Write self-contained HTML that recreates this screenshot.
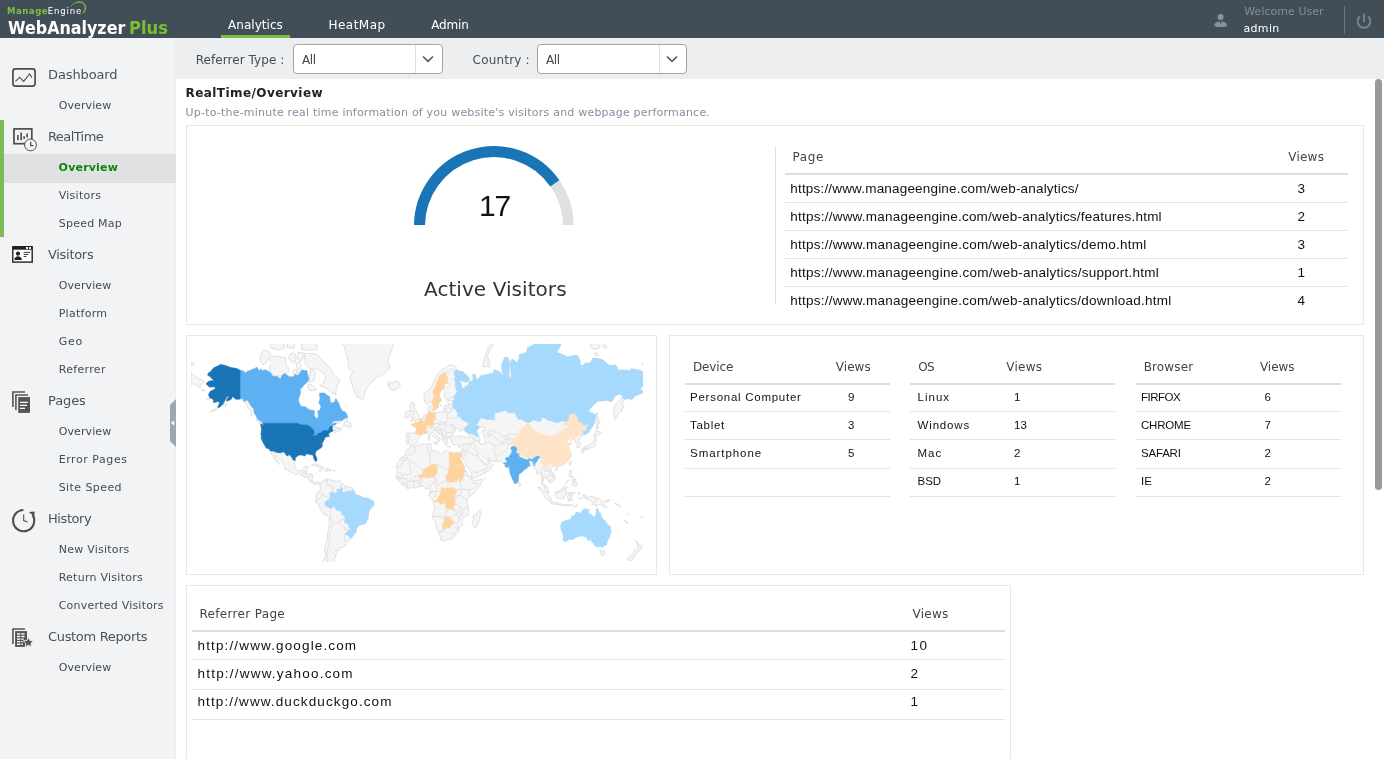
<!DOCTYPE html>
<html lang="en">
<head>
<meta charset="utf-8">
<title>WebAnalyzer Plus - RealTime Overview</title>
<style>
*{box-sizing:border-box;margin:0;padding:0}
html,body{width:1384px;height:760px;overflow:hidden;background:#fff}
body{font-family:"DejaVu Sans","Liberation Sans",sans-serif;font-size:12px;color:#333;position:relative}
.a{position:absolute}
.x{position:absolute;white-space:nowrap;line-height:20px}
.d{font-family:"DejaVu Sans","Liberation Sans",sans-serif}
.l{font-family:"Liberation Sans","DejaVu Sans",sans-serif}
#hdr{position:absolute;left:0;top:0;width:1384px;height:38px;background:#424e57}
#side{position:absolute;left:0;top:38px;width:176px;height:721px;background:#f2f3f5;border-right:1px solid #eaecef}
#fbar{position:absolute;left:176px;top:38px;width:1208px;height:41px;background:#edeef0}
.sel{position:absolute;top:44px;width:150px;height:30px;background:#fff;border:1px solid #a3a3a3;border-radius:4px}
.sel i{position:absolute;right:26px;top:0;width:1px;height:28px;background:#ddd}
.sel svg{position:absolute;right:8px;top:10px}
.panel{position:absolute;border:1px solid #e3e8e8;background:#fff}
</style>
</head>
<body>
<div id="root" style="position:absolute;left:0;top:0;width:1384px;height:760px;will-change:transform">
<div id="hdr"></div>
<div class="a" style="left:221px;top:35px;width:69px;height:3px;background:#7ac143"></div>
<!-- logo -->
<svg class="a" style="left:68px;top:0px" width="22" height="16" viewBox="68 0 22 16"><g fill="none" stroke="#7ac143" stroke-width="0.7"><path d="M70.8 6.6 C73.5 2.6 78.5 1 82.2 2.4 C85.8 3.8 86.8 8 84.2 12.6"/><path d="M74 3.8 C77.5 1.6 81.6 1.6 83.8 3.8 C85.9 6 85.9 9.6 83.4 13.2"/><path d="M77.5 2.4 C80.5 1.8 83.4 2.8 84.6 5 C85.6 7 85.2 10 82.8 13.4"/></g></svg>
<div class="x d" style="left:7.5px;top:18px;font-size:17px;font-weight:bold;color:#fff;transform:scaleX(0.936);transform-origin:0 0">WebAnalyzer</div>
<div class="x d" style="left:128.9px;top:18px;font-size:17px;font-weight:bold;color:#7abf2e;transform:scaleX(0.96);transform-origin:0 0">Plus</div>
<!-- header icons -->
<svg class="a" style="left:1212px;top:12px" width="18" height="18" viewBox="1212 12 18 18"><circle cx="1220.6" cy="17" r="3" fill="#88929a"/><path d="M1214.2 25.5 C1214.4 22.6 1217 21.4 1220.6 21.4 C1224.2 21.4 1226.9 22.6 1227.1 25.5 C1225.5 27.6 1215.8 27.6 1214.2 25.5 Z" fill="#88929a"/><path d="M1219.6 21.4 L1220.6 24.5 L1221.6 21.4 Z" fill="#424e57"/></svg>
<div class="a" style="left:1344px;top:6px;width:1px;height:28px;background:#69747c"></div>
<svg class="a" style="left:1355px;top:12px" width="18" height="18" viewBox="1355 12 18 18"><path d="M1359.9 16.5 A6.4 6.4 0 1 0 1368.1 16.5" fill="none" stroke="#7a858c" stroke-width="1.9"/><path d="M1364 13.8 V22" stroke="#7a858c" stroke-width="1.9"/></svg>

<div id="side">
<div class="a" style="left:0;top:82px;width:4px;height:117px;background:#7cba59"></div>
<div class="a" style="left:4px;top:116px;width:172px;height:29px;background:#e0e1e3"></div>
<svg class="a" style="left:0;top:0" width="60" height="722" viewBox="0 38 60 722">
<g fill="none" stroke="#4d4d4d">
<rect x="12.9" y="68.9" width="22.2" height="17.2" rx="2.6" stroke-width="1.7"/>
<path d="M15.5 81.4 L19.7 77.2 L23.6 81.3 L29.6 73.9 L32 77.8" stroke-width="1.1"/>
<rect x="14" y="128.9" width="17.8" height="14.8" stroke-width="1.7"/>
<path d="M17.9 135 V140.3 M21.2 132.4 V140.3 M24.1 136.2 V139 M27.1 133.6 V137.5" stroke-width="1.6"/>
<circle cx="30.5" cy="144.9" r="5.9" fill="#f2f3f5" stroke-width="1"/>
<path d="M30.7 141.8 V145.6 H33.4" stroke-width="1.3"/>
</g>
<g>
<rect x="12.1" y="246" width="20.8" height="16.8" fill="#222"/>
<rect x="13.5" y="249.7" width="18" height="11.7" fill="#fff"/>
<rect x="26" y="247" width="2" height="1.9" fill="#fff"/><rect x="29" y="247" width="2" height="1.9" fill="#fff"/>
<circle cx="18" cy="253.6" r="2.1" fill="#222"/>
<path d="M14.2 260 C14.6 257.4 16 256.2 18 256.2 C20 256.2 21.6 257.4 22 260 Z" fill="#222"/>
<path d="M23.7 252.4 H30 M23.7 254.5 H28.3 M23.7 256.5 H26.3" stroke="#222" stroke-width="0.9"/>
</g>
<g fill="none" stroke="#555" stroke-width="1.6">
<path d="M25 392 H12.9 V407"/>
<path d="M28 395 H15.9 V410"/>
</g>
<rect x="18.2" y="397.1" width="11.8" height="15.8" fill="#555"/>
<path d="M20 402.3 H27.9 M20 405.3 H27 M20 408.4 H25" stroke="#fff" stroke-width="1.3"/>
<g fill="none" stroke="#4d4d4d">
<path d="M23.4 510 A10.6 10.6 0 1 0 32.6 514.9" stroke-width="2.1"/>
<path d="M23.7 514.4 V520.6 L27.6 522" stroke-width="1.1"/>
</g>
<path d="M28.8 512 L34.6 511.6 L34.3 516.4 Z" fill="#4d4d4d"/>
<path d="M25 629 H12.9 V644" fill="none" stroke="#555" stroke-width="1.6"/>
<rect x="15.1" y="631.1" width="11.9" height="15.8" fill="#555"/>
<g fill="#fff">
<rect x="17" y="633.2" width="3.3" height="1.4"/><rect x="21.3" y="633.2" width="3.3" height="1.4"/>
<rect x="17" y="635.8" width="3.3" height="1.4"/><rect x="21.3" y="635.8" width="3.3" height="1.4"/>
<rect x="17" y="638.4" width="3.3" height="1.4"/><rect x="21.3" y="638.4" width="2.3" height="1.4"/>
<rect x="17" y="641" width="3.3" height="1.4"/><rect x="21.3" y="641" width="1.3" height="1.4"/>
<rect x="17" y="643.6" width="3.3" height="1.4"/><rect x="21.3" y="643.6" width="1.6" height="1.4"/>
</g>
<path d="M28.4 637.2 L29.9 640.5 L33.5 640.9 L30.9 643.4 L31.6 647.0 L28.4 645.2 L25.2 647.0 L25.9 643.4 L23.3 640.9 L26.9 640.5 Z" fill="#555" stroke="#f2f3f5" stroke-width="0.9"/>
</svg>
<svg class="a" style="left:170px;top:361px" width="6" height="48" viewBox="0 0 6 48"><path d="M6 0 L0 6 V42 L6 48 Z" fill="#9aa8b3"/><path d="M4.2 21.2 V26.8 L1 24 Z" fill="#fff"/></svg>
</div>

<div id="fbar"></div>
<div class="sel" style="left:293px"><i></i><svg width="12" height="8" viewBox="0 0 12 8"><path d="M1 1.5 L6 6.3 L11 1.5" fill="none" stroke="#555" stroke-width="1.6"/></svg></div>
<div class="sel" style="left:537px"><i></i><svg width="12" height="8" viewBox="0 0 12 8"><path d="M1 1.5 L6 6.3 L11 1.5" fill="none" stroke="#555" stroke-width="1.6"/></svg></div>

<div class="a" style="left:1375px;top:79px;width:7px;height:411px;background:#999;border-radius:3.5px"></div>

<div class="panel" style="left:186px;top:125px;width:1178px;height:200px"></div>
<svg class="a" style="left:404px;top:140px" width="180" height="85" viewBox="404 140 180 85">
<path d="M419.5 226 A74.4 74.4 0 0 1 568.3 226" fill="none" stroke="#e0e0e0" stroke-width="11"/>
<path d="M419.5 226 A74.4 74.4 0 0 1 554.8 183.3" fill="none" stroke="#1975b5" stroke-width="11"/>
</svg>

<div class="panel" style="left:186px;top:335px;width:471px;height:240px"></div>
<svg class="a" style="left:191px;top:344px" width="452" height="218" viewBox="191 344 452 218">
<path fill="#f5f5f5" stroke="#dcdcdc" stroke-width="0.9" stroke-linejoin="round" d="M191.0,372.9 193.5,374.3 196.6,377.3 199.8,379.3 201.7,379.6 203.8,382.1 202.3,384.0 200.4,384.6 200.7,387.0 199.2,387.5 196.6,386.1 195.4,384.0 192.9,383.7 191.6,384.9 191.0,385.5Z M191.0,363.2 193.5,363.2 194.1,364.8 192.2,365.6 191.0,365.6Z M217.7,407.3 215.5,408.7 213.0,410.2 210.1,411.8 214.3,410.7 217.4,409.1 219.3,407.3Z M308.9,379.3 310.0,373.3 310.0,369.7 313.8,370.1 315.3,371.8 315.0,376.0 313.8,380.9 311.3,381.8 309.4,381.8Z M298.7,375.0 296.8,372.6 297.4,369.0 296.1,364.0 298.0,361.2 300.6,363.2 301.2,369.0 300.6,371.5Z M333.6,425.3 335.8,427.0 336.5,428.4 337.7,428.8 340.2,429.3 341.7,427.3 342.1,429.0 340.9,430.1 337.7,431.3 335.2,433.2 334.3,432.7 334.6,431.3 336.5,430.1 334.6,430.2 333.3,430.4 332.8,430.1 332.3,429.3 332.3,426.8Z M325.7,330.4 332.0,342.8 339.6,342.8 344.0,345.4 347.2,357.0 348.4,363.2 349.1,369.0 353.5,370.8 350.3,376.0 350.1,379.3 352.2,385.5 354.7,392.6 356.6,396.6 360.4,398.6 362.3,399.4 363.5,397.9 364.2,394.0 366.7,388.4 370.5,383.4 376.1,377.7 383.7,374.3 387.5,370.8 390.0,367.1 387.5,361.2 390.0,354.8 392.5,347.9 393.8,340.2 395.0,318.4 379.9,287.2 342.1,302.2Z M387.5,384.0 389.1,381.2 391.9,383.1 395.0,381.5 397.5,380.9 399.3,384.0 400.6,385.5 398.8,387.5 395.0,390.1 391.9,389.8 389.4,389.0 390.0,387.0 387.5,385.8 390.0,384.9Z M410.5,421.1 413.3,420.7 415.2,420.1 417.7,419.7 419.5,418.9 418.7,418.3 419.8,415.8 418.0,415.2 417.7,413.9 417.6,413.1 416.1,411.3 415.7,409.6 415.1,408.9 413.7,408.7 415.2,405.0 413.3,404.8 412.7,405.0 413.9,402.6 411.4,402.6 410.4,405.2 409.9,407.1 410.8,408.7 411.4,410.9 411.5,411.6 413.4,411.1 413.9,413.1 413.8,414.3 412.0,414.6 412.5,416.0 411.2,417.5 413.3,418.5 414.3,418.3 412.4,418.9Z M405.1,417.7 407.0,418.1 409.6,416.8 410.1,414.6 410.8,412.2 410.1,410.5 408.5,410.2 407.0,412.0 405.1,412.6 405.4,414.6 405.9,416.0 404.6,417.1Z M410.6,445.5 409.6,444.3 408.4,443.7 406.5,444.0 406.6,441.6 405.7,441.1 406.5,438.8 406.6,436.1 406.0,434.1 407.6,432.9 410.4,433.1 412.9,433.2 415.4,433.4 416.2,431.5 416.3,429.7 416.2,428.4 415.1,427.0 412.2,425.5 411.7,424.3 413.3,423.6 415.7,424.0 415.3,421.8 416.3,422.4 417.8,422.2 419.6,421.1 419.7,419.5 420.8,419.1 422.0,418.5 422.7,417.3 423.5,415.4 424.5,414.6 426.5,414.6 427.8,413.7 428.5,413.3 428.9,411.1 428.0,409.8 427.9,407.5 428.5,406.2 431.1,404.8 430.7,406.6 431.4,407.8 430.5,409.1 429.8,410.5 430.2,411.3 431.4,412.2 431.6,413.1 433.4,412.2 434.7,412.0 435.6,413.3 438.1,412.4 440.4,411.3 441.1,412.2 442.6,412.2 442.9,411.1 444.2,410.2 444.2,406.9 444.8,405.2 446.2,404.8 447.0,406.4 447.9,406.4 448.4,404.0 447.3,402.4 447.2,401.1 448.8,400.4 451.1,400.2 453.0,400.4 454.2,399.2 455.7,399.4 453.9,397.6 452.7,397.9 449.2,398.6 446.7,399.7 444.8,397.9 444.5,395.3 444.4,392.6 444.8,390.7 446.0,389.0 448.6,386.1 449.7,385.5 449.4,383.7 448.2,383.1 445.7,383.1 444.4,384.6 444.8,386.4 443.6,389.0 442.0,389.8 440.2,391.8 439.4,394.0 439.4,397.4 441.5,399.2 441.0,400.9 439.1,402.6 438.7,404.3 438.4,407.1 437.6,408.4 435.8,408.7 435.6,410.0 433.9,410.0 433.7,408.2 432.8,405.2 431.9,403.1 431.7,401.6 430.9,401.1 429.7,402.1 427.8,403.8 426.5,404.0 424.8,402.1 424.0,398.1 424.0,394.5 425.3,392.6 428.4,389.8 430.8,389.8 430.3,387.8 432.8,384.0 434.1,380.9 436.0,377.7 437.2,374.3 439.7,371.5 441.6,369.7 444.8,368.2 447.3,366.0 450.2,364.8 453.0,365.2 456.7,367.5 455.5,369.7 456.5,369.7 459.3,371.1 463.0,371.8 468.1,376.7 469.6,379.9 468.1,381.8 465.6,382.1 461.8,380.9 459.0,379.3 461.2,384.0 461.7,387.2 463.7,388.7 465.6,387.5 464.9,385.5 468.1,386.7 468.1,384.0 470.6,381.2 473.1,381.8 473.1,377.7 472.9,374.3 475.6,375.0 476.3,379.3 477.9,379.6 480.7,376.0 485.1,375.0 489.5,373.9 493.3,373.3 493.9,369.7 498.3,371.5 500.8,372.6 502.1,374.3 504.0,375.0 502.1,370.8 501.7,365.2 504.0,359.1 505.2,357.0 508.4,357.9 509.4,363.2 509.0,370.8 509.0,376.0 510.3,379.9 511.5,376.0 510.9,370.8 510.3,363.2 512.2,359.1 515.3,361.2 516.6,363.2 519.1,359.1 519.5,354.8 526.7,352.6 527.3,347.9 537.4,342.8 543.7,340.2 549.1,333.4 552.5,337.4 558.8,340.2 560.7,345.4 556.3,352.6 560.0,353.5 567.6,357.0 573.3,355.7 577.7,355.7 580.2,361.2 579.6,364.0 582.7,366.0 585.2,363.2 590.3,363.2 592.8,358.3 596.6,358.3 602.9,360.0 606.6,363.2 609.8,365.6 615.5,365.2 617.1,367.1 617.7,370.1 623.0,370.1 628.1,370.4 629.3,370.8 631.8,368.6 635.6,369.7 639.4,370.1 644.4,372.9 644.4,385.5 643.2,387.0 641.3,386.4 640.6,388.4 643.2,392.9 638.1,394.5 634.4,396.6 632.2,399.2 628.1,398.4 624.9,399.4 623.6,401.6 621.8,404.0 623.0,404.5 623.3,408.2 621.5,408.7 621.8,411.3 619.2,412.0 617.1,415.2 615.1,419.3 614.2,415.2 613.7,410.9 614.2,406.4 615.5,404.5 618.6,401.6 621.6,398.6 622.1,397.6 623.0,395.3 619.5,394.2 616.7,395.0 614.8,396.1 612.9,400.4 610.4,401.4 606.6,400.2 602.9,400.9 597.8,400.9 594.7,404.0 590.9,407.5 588.1,411.3 590.0,411.8 590.9,413.1 592.2,413.1 594.0,414.1 595.6,414.6 595.8,416.8 594.7,419.3 594.7,422.2 592.8,426.0 590.9,428.8 588.4,432.4 585.2,434.4 582.7,435.0 582.2,435.1 581.1,437.0 580.8,438.0 578.3,439.5 578.3,440.4 579.4,441.4 580.7,444.0 580.8,445.5 580.4,446.8 578.9,447.4 577.0,448.0 577.0,445.5 577.2,444.0 576.5,442.9 575.1,442.4 575.5,440.3 574.4,439.1 570.9,440.9 571.6,438.3 570.1,437.8 567.6,440.4 566.0,441.1 567.5,443.2 568.2,443.7 569.9,442.7 572.0,443.3 570.1,444.8 568.0,447.1 569.2,449.4 571.1,452.1 570.7,454.6 571.4,454.8 570.7,457.0 568.9,459.4 567.6,461.2 566.3,462.5 564.4,464.4 561.5,465.4 560.0,465.8 557.5,466.6 556.5,468.1 555.9,466.5 553.7,466.5 552.1,467.4 550.8,469.8 551.8,471.4 554.0,473.6 555.2,477.0 555.4,479.2 552.5,481.0 551.8,482.2 550.0,483.3 549.7,481.8 549.3,481.0 548.1,480.8 547.3,479.4 546.2,478.5 544.9,478.1 544.8,477.0 543.7,477.3 543.5,479.0 542.8,480.9 542.7,482.6 543.7,483.5 544.3,485.1 545.5,485.6 546.4,486.4 547.9,488.1 547.9,489.8 548.6,491.3 549.0,492.4 548.1,492.6 545.3,490.7 544.3,488.5 544.0,487.3 543.3,486.0 541.5,484.1 541.8,481.8 541.9,479.6 542.0,477.7 541.3,476.4 540.8,473.1 539.6,472.5 538.0,474.0 536.5,473.8 536.7,471.8 536.1,469.8 534.8,468.5 534.0,467.4 533.3,465.4 531.9,465.1 531.1,465.8 529.8,466.3 528.5,466.3 527.3,466.5 527.2,467.5 526.5,468.6 525.0,469.1 523.5,470.7 521.4,472.5 520.0,473.4 518.8,474.2 518.6,477.0 518.3,479.0 518.2,481.2 517.2,482.4 516.2,482.9 515.3,484.0 514.1,482.8 513.7,481.5 512.4,479.0 511.9,477.7 511.0,475.3 510.3,473.8 509.7,471.1 509.4,469.8 509.3,467.1 509.0,465.5 508.5,466.9 507.1,467.5 505.9,467.1 504.6,465.4 505.9,465.0 506.2,464.4 504.4,464.1 503.6,463.5 502.7,463.2 501.7,461.9 501.5,461.1 498.9,461.4 495.3,461.4 492.0,461.1 489.9,460.8 489.2,458.7 486.3,459.4 484.0,458.1 481.9,456.3 481.7,455.3 480.7,454.3 479.3,454.1 478.2,454.7 478.2,456.0 479.2,457.7 480.7,459.3 480.9,460.7 481.7,461.9 482.2,460.1 482.7,461.2 482.3,462.6 483.8,462.9 486.3,462.5 487.4,461.2 488.4,460.3 488.7,459.7 488.7,461.8 489.5,463.0 491.5,463.6 493.0,465.1 491.5,467.8 490.5,469.8 489.5,469.9 487.0,471.7 485.8,472.5 483.5,473.8 479.4,475.7 474.4,477.9 472.5,478.1 471.6,475.3 471.5,473.3 469.3,469.8 467.1,466.5 465.6,463.0 463.9,460.5 462.4,457.4 461.7,455.3 460.8,452.7 461.7,450.9 461.9,450.0 462.4,448.8 462.9,447.1 462.9,445.5 463.3,444.6 461.3,444.3 459.9,445.4 458.0,444.8 456.2,444.3 454.9,445.2 453.2,444.4 452.1,444.0 452.0,441.7 451.5,441.6 450.7,440.3 450.7,439.1 450.4,438.0 448.6,437.7 447.7,438.8 446.5,438.3 446.3,440.0 447.0,441.1 447.9,442.4 446.7,442.5 446.9,443.5 446.4,444.8 445.9,444.9 445.0,444.3 444.5,442.7 444.4,441.9 443.9,441.1 443.1,439.8 442.1,438.3 442.3,436.6 441.6,435.6 441.0,435.0 439.7,434.1 437.9,433.2 436.8,432.0 436.0,430.2 435.2,430.9 435.0,429.3 433.2,430.1 433.3,432.0 434.8,433.2 435.6,435.1 437.9,436.0 437.9,436.8 439.1,437.5 441.0,439.0 440.4,439.5 439.1,438.3 438.6,439.6 439.4,440.8 438.5,441.9 437.5,442.5 437.9,441.3 437.5,439.1 436.3,438.1 435.6,437.8 434.1,437.1 433.1,436.1 431.6,435.1 430.9,434.1 430.5,432.5 429.0,431.7 427.8,432.5 427.1,432.7 426.0,433.7 424.5,433.6 423.0,433.2 421.6,433.9 421.6,435.1 421.7,436.0 420.5,436.8 418.7,438.0 417.3,440.0 418.0,441.1 416.8,442.9 415.3,444.1 414.6,444.4 412.2,444.4Z M410.3,445.8 411.0,445.7 413.9,446.6 416.4,446.0 419.6,444.8 421.5,444.3 424.0,444.3 427.1,444.0 430.0,443.5 430.7,444.1 431.7,444.0 430.9,445.5 431.3,447.1 430.4,448.2 431.7,449.8 433.4,450.4 434.3,450.3 436.8,451.2 437.6,452.7 439.7,453.2 441.6,454.1 442.9,453.1 443.0,451.3 444.9,450.3 446.8,450.7 449.2,452.2 451.7,452.5 454.2,453.2 456.7,452.2 458.4,452.7 460.8,452.7 461.7,455.3 460.9,457.7 460.0,457.4 458.8,454.7 460.3,458.4 461.2,460.5 462.7,463.2 464.2,465.8 464.6,468.5 464.8,470.1 466.3,471.1 467.5,474.3 469.6,475.6 472.0,478.1 472.2,479.5 473.8,480.9 476.9,480.0 479.4,479.9 482.3,479.2 482.1,481.0 480.7,484.1 478.2,488.5 475.6,491.2 474.8,491.7 472.5,494.2 470.1,496.3 468.3,497.9 467.7,499.4 466.6,501.8 467.2,502.8 467.5,504.9 468.6,507.5 468.8,510.1 469.1,512.7 468.1,514.9 464.3,517.0 461.8,519.7 462.4,522.6 462.4,525.4 459.3,527.2 458.8,528.1 459.1,529.5 458.5,532.1 456.7,533.7 454.2,536.8 452.8,538.3 450.1,539.8 446.0,539.9 442.9,541.0 441.0,540.2 440.6,537.5 439.5,534.6 438.5,531.8 436.8,529.0 436.0,526.0 436.0,523.8 434.5,520.6 432.6,517.3 432.8,516.2 432.6,514.0 433.4,511.4 434.7,509.9 435.1,507.9 434.1,505.6 433.2,501.9 432.8,500.5 431.7,499.1 429.8,497.2 428.8,495.1 429.7,493.7 430.0,491.3 429.9,489.3 428.4,488.5 426.5,488.7 425.3,488.8 423.4,486.2 422.0,486.1 419.2,486.5 417.4,487.3 415.2,488.1 413.9,487.8 412.7,487.6 410.1,488.1 408.3,488.7 406.4,487.9 404.1,486.2 402.0,484.9 401.1,483.5 400.4,482.2 398.8,480.4 396.7,478.5 396.5,477.2 395.7,475.5 396.9,473.8 397.5,471.1 396.9,469.3 396.3,467.1 397.5,463.5 399.4,460.1 401.1,457.9 403.2,456.6 405.1,455.3 405.5,453.8 405.4,452.4 407.0,449.7 408.1,449.2 409.1,448.6Z M479.8,509.4 480.9,513.3 481.3,514.5 479.9,516.6 479.4,519.3 478.2,523.3 477.0,526.6 474.6,527.6 472.7,524.7 472.2,522.3 473.6,519.9 473.1,517.3 473.6,514.9 476.0,514.2 478.0,512.3 479.2,510.1Z M270.2,450.9 270.8,452.4 271.8,454.6 273.9,457.4 273.1,457.9 274.7,459.3 276.4,461.7 278.8,463.9 279.3,464.6 279.9,463.9 278.8,462.6 277.5,460.3 276.2,458.1 275.1,456.0 273.5,453.8 273.1,451.9 275.4,453.1 276.0,454.7 277.9,457.4 279.9,459.6 281.7,461.7 283.7,464.1 284.8,466.5 285.1,467.8 285.4,469.4 286.3,469.7 289.0,471.1 290.5,471.9 291.9,472.7 294.3,473.8 296.8,474.2 298.3,473.5 299.9,474.0 301.6,475.7 303.1,476.5 304.6,476.9 306.9,477.4 307.6,477.8 308.5,479.0 309.6,480.1 309.6,481.5 310.9,481.8 312.3,482.9 313.2,483.7 314.4,483.8 316.3,485.1 316.9,483.8 317.6,482.8 319.2,483.7 319.6,485.1 320.2,483.2 318.2,482.2 317.1,482.4 315.4,483.1 313.8,482.2 313.2,481.5 312.3,480.3 312.1,478.3 312.6,476.4 312.9,475.1 311.3,474.0 309.4,473.9 307.2,473.9 306.2,474.0 305.7,473.9 306.5,473.1 306.6,471.8 306.7,470.5 307.5,469.1 307.6,468.1 308.4,466.9 307.5,466.5 306.2,466.5 304.0,467.0 303.7,468.5 303.5,469.4 302.4,470.3 300.8,470.5 298.7,470.9 297.0,470.1 296.7,469.5 295.3,467.5 294.6,465.4 294.6,463.0 295.3,460.4 294.9,460.4 292.9,459.7 292.4,458.1 291.4,457.0 290.0,454.8 288.6,454.8 287.8,456.0 286.1,455.1 285.6,453.7 283.6,451.9 281.4,451.9 281.4,452.7 277.8,452.7 273.1,450.9Z M310.8,465.9 313.2,464.4 313.9,464.1 316.3,464.3 318.2,465.2 320.7,466.2 322.3,467.1 324.2,468.2 322.6,468.6 319.8,468.7 320.5,467.7 318.8,467.1 316.9,466.2 314.7,465.5 312.5,465.5Z M324.0,470.7 325.7,468.6 327.4,468.7 329.5,468.9 331.5,470.3 329.7,470.6 327.6,471.5 326.0,470.9Z M319.1,470.6 321.6,471.0 320.7,471.4 319.2,471.0Z M333.1,470.5 335.1,470.6 334.8,471.1 333.1,471.1Z M320.2,483.2 321.0,484.1 322.5,480.9 323.5,480.3 325.7,479.6 327.6,478.5 327.9,480.3 327.3,481.5 329.3,479.6 329.5,478.7 331.4,480.8 334.6,480.8 336.5,481.3 339.0,480.8 339.7,480.6 340.9,482.2 341.5,483.5 343.4,484.1 344.4,485.6 345.9,486.6 348.2,486.8 349.8,487.0 351.8,488.0 352.6,489.2 354.7,491.9 354.7,494.2 356.6,495.1 357.5,495.0 361.6,496.7 361.9,497.4 365.4,497.9 368.6,498.6 370.7,500.1 373.2,500.8 373.9,503.2 373.6,505.6 371.1,508.1 369.2,510.7 368.6,513.3 368.3,517.0 367.7,519.5 366.9,520.3 366.1,522.6 364.8,524.0 363.3,524.0 361.4,524.4 359.4,525.4 357.4,527.0 356.6,528.1 356.5,530.4 356.0,531.8 354.7,533.8 353.2,535.6 352.1,537.1 350.4,539.3 348.5,541.2 346.9,541.2 344.1,539.8 344.1,540.7 345.7,542.1 346.3,543.5 345.3,546.0 343.4,547.1 339.5,547.5 339.4,550.3 335.8,550.6 336.7,553.4 335.4,555.2 335.8,557.8 332.7,559.6 334.8,561.8 332.4,565.8 330.8,568.1 331.5,572.0 328.3,574.9 323.9,571.1 322.6,563.3 322.6,560.9 325.1,557.8 325.7,552.6 324.7,552.3 324.9,548.9 325.5,544.6 327.0,541.3 327.5,538.3 327.6,533.8 328.3,529.5 329.0,524.8 329.4,520.2 329.2,517.8 327.6,516.3 326.1,515.4 323.0,513.8 321.6,511.8 320.6,509.4 319.2,506.9 318.2,504.4 317.1,502.8 315.4,501.8 315.3,499.9 316.6,498.5 316.9,497.6 315.8,497.0 316.1,495.5 316.8,494.2 316.9,493.2 318.4,492.2 320.1,490.9 320.7,489.3 320.1,487.3 320.2,485.7 319.6,485.1Z M335.8,394.8 332.0,392.9 327.0,389.0 323.9,387.0 319.5,385.8 324.5,382.4 325.7,376.0 319.5,369.7 316.9,369.0 310.6,369.0 305.6,365.2 305.0,361.2 304.3,353.5 310.6,353.5 315.7,353.9 320.7,357.9 324.5,363.2 329.5,367.1 332.0,370.8 333.3,375.0 337.7,377.7 340.2,380.6 337.1,385.5 335.8,391.2Z M289.9,370.8 285.4,374.3 279.1,376.0 274.1,375.0 270.3,372.6 269.1,367.1 272.8,363.2 268.4,359.1 274.1,355.7 281.7,357.0 285.4,357.9 286.1,365.2Z M259.9,360.4 262.8,364.8 265.9,363.6 267.2,359.1 271.0,355.3 269.7,351.7 264.7,350.3 260.9,353.5Z M308.1,384.0 311.9,384.6 315.7,388.4 316.3,389.8 313.2,390.4 310.0,390.7 308.1,388.4Z M288.6,357.9 291.7,362.0 295.5,362.0 296.1,357.0 294.3,353.0 290.5,353.5Z M297.0,358.7 301.2,361.2 303.7,356.2 303.1,352.6 298.0,352.6Z M292.4,372.6 294.9,373.9 297.4,373.3 296.1,369.7 293.6,369.7Z M301.8,349.8 310.6,350.3 316.9,349.8 316.9,343.9 306.9,340.2 301.8,341.3Z M270.3,347.9 279.1,350.3 284.2,347.9 284.2,342.8 276.6,340.2 270.3,341.8Z M286.7,347.9 294.3,347.9 294.9,341.8 288.0,340.2Z M304.3,341.3 316.9,341.8 320.7,334.6 327.0,328.5 335.8,310.7 329.5,292.5 304.3,310.7Z M343.0,425.8 344.6,422.2 346.2,418.7 347.8,418.1 347.2,421.3 348.4,422.2 350.3,422.6 350.9,424.2 351.3,426.0 350.2,427.5 347.8,427.1 347.2,425.8Z M256.0,419.7 259.9,420.7 262.1,423.6 262.3,424.3 260.2,423.8 258.0,421.8Z M223.1,405.0 225.9,403.3 226.2,405.2 224.0,406.9Z M250.2,413.1 251.7,413.1 252.4,416.8 251.1,415.6Z M206.8,398.6 209.0,398.4 208.9,399.7 207.1,399.7Z M201.4,389.3 205.1,390.4 203.8,391.2 201.4,390.4Z M336.5,421.5 340.0,423.0 337.7,422.8Z M336.6,427.1 339.6,428.1 338.1,428.6Z M240.1,398.4 239.5,399.2 242.0,399.9 244.5,402.6 246.4,404.5 248.3,408.2 250.2,410.9 252.1,411.3 254.0,410.9 254.0,410.9 254.0,408.7 251.4,406.4 249.5,402.9 247.0,399.7 244.5,401.6 242.6,398.4 240.1,398.4Z M537.7,487.1 540.5,487.6 542.0,489.5 544.0,491.4 545.9,492.1 548.1,494.2 549.2,495.5 549.8,497.1 551.2,498.2 551.0,501.5 549.5,501.6 547.4,500.1 545.5,498.0 544.0,495.3 542.4,493.6 541.8,491.9 539.9,490.0 538.0,488.1Z M550.2,502.8 552.2,501.8 554.5,502.7 556.9,502.9 559.7,503.0 561.8,504.1 561.9,505.2 559.4,504.8 556.3,504.3 553.7,504.1 551.7,503.5Z M562.6,504.6 565.1,504.7 567.6,504.8 570.1,504.8 572.6,504.7 572.4,505.3 568.9,505.5 565.1,505.6 562.8,505.3Z M573.3,507.2 575.1,505.6 577.9,504.8 577.0,505.7 574.5,507.1Z M555.0,493.8 555.6,491.8 557.5,492.2 558.0,490.9 560.0,490.2 561.3,488.5 563.2,487.3 564.7,485.4 566.0,486.6 567.8,487.6 566.3,488.8 566.1,490.4 566.3,491.7 567.6,492.9 566.0,493.6 565.7,495.5 564.4,496.5 564.2,498.6 562.2,499.4 560.0,498.4 558.1,498.2 556.5,497.9 556.3,496.1 555.2,495.1Z M568.6,493.2 569.9,492.6 572.6,493.1 575.1,492.2 574.5,493.7 572.6,493.7 570.1,493.7 569.1,494.2 569.5,495.5 570.7,495.3 573.0,495.2 572.4,496.1 571.1,496.6 571.7,498.4 572.9,499.9 572.0,501.0 570.9,500.3 570.1,498.0 569.4,497.9 569.4,501.1 568.2,501.1 568.2,498.6 567.3,497.7 568.0,495.8 568.6,494.2Z M582.7,495.2 584.6,494.7 586.5,495.2 587.7,498.4 590.9,496.2 595.3,497.5 599.7,499.0 601.3,500.9 603.9,501.8 603.1,503.0 604.8,505.6 607.3,507.2 606.9,507.8 604.1,507.1 602.9,506.2 600.3,504.2 598.5,504.9 597.2,505.8 595.3,505.7 593.4,504.4 591.5,504.8 592.5,502.8 591.5,501.1 588.4,499.7 585.9,499.1 584.8,497.9 586.1,497.1 584.0,497.0 582.6,496.0Z M604.5,501.3 606.6,500.5 609.2,499.5 609.5,500.4 607.3,502.0 605.4,502.0Z M578.3,491.9 578.9,491.7 579.8,492.9 579.3,495.1 578.6,493.9Z M578.9,498.0 582.5,498.2 581.4,498.7 579.2,498.6Z M569.6,470.5 571.6,470.5 571.9,472.5 570.9,474.0 571.1,476.1 573.9,477.7 574.0,478.2 572.4,477.0 570.1,476.8 569.6,476.0 568.9,475.1 569.2,473.6 569.4,471.8Z M571.4,485.4 573.3,483.2 575.7,481.8 577.0,484.1 576.7,486.2 575.8,487.1 575.5,485.6 573.9,485.6 573.3,484.6Z M571.4,479.2 572.9,479.6 573.9,480.0 575.8,478.5 575.9,480.3 575.1,481.5 573.3,482.2 572.0,481.7 571.4,480.9Z M565.3,483.5 567.0,482.2 568.3,479.9 567.8,481.2 566.1,483.3Z M570.7,461.2 571.4,461.7 570.7,463.7 570.0,465.8 569.1,464.6 569.1,463.3 570.1,461.7Z M554.6,469.4 555.6,468.5 557.4,468.5 557.5,469.1 556.8,470.3 555.6,470.9 554.6,470.3Z M518.3,481.9 519.5,482.4 520.1,483.5 520.7,485.0 520.5,486.1 519.1,486.8 518.3,486.0 518.2,484.1Z M595.2,436.6 595.9,438.3 596.6,440.0 595.3,441.9 595.2,444.1 595.1,446.0 593.9,447.2 593.7,446.6 592.4,447.5 590.5,447.7 590.1,448.2 588.8,449.4 587.9,448.2 585.9,448.0 584.3,448.2 582.7,448.8 583.1,447.9 584.7,446.5 586.7,446.2 588.6,446.2 589.0,445.2 590.0,443.5 590.6,444.3 592.2,443.3 593.3,441.7 594.0,439.5 594.0,438.3 594.4,437.1Z M594.0,436.6 595.3,436.1 594.4,435.3 595.3,435.0 598.2,435.8 599.7,434.1 601.1,433.6 600.6,431.8 597.8,431.8 596.3,429.7 596.1,432.4 595.7,433.7 594.5,433.6 593.8,435.5Z M582.6,448.8 583.6,449.2 584.0,450.4 583.2,452.5 582.3,453.1 581.7,452.7 581.8,450.7 581.1,450.1 581.2,449.4 582.0,449.2Z M584.7,448.6 586.7,448.0 587.4,448.9 586.7,449.8 585.6,449.5 585.2,450.6 584.5,449.7Z M597.3,412.2 597.8,415.2 598.2,418.3 598.8,421.3 600.0,423.2 597.8,423.2 597.7,426.0 598.5,427.3 598.3,428.8 597.4,427.5 596.6,428.8 596.6,426.0 596.7,423.2 596.8,420.3 596.3,417.3 596.4,414.3Z M635.2,540.4 637.2,541.8 637.9,544.3 638.8,543.8 639.4,545.4 641.9,545.4 642.5,545.5 641.8,547.8 640.6,548.4 640.5,549.8 638.5,551.9 637.9,551.4 638.3,549.6 636.6,548.1 637.8,546.8 637.9,545.2 637.1,543.3 635.6,541.3Z M635.2,550.1 637.2,552.1 636.9,553.4 635.4,555.2 635.7,555.9 633.5,556.6 632.8,559.4 630.6,560.7 629.7,560.7 627.4,559.6 627.8,557.8 629.7,556.0 631.8,554.3 633.5,552.6 634.4,550.7Z M600.0,550.4 602.2,551.1 604.5,550.7 604.5,552.6 604.0,554.7 602.6,555.3 601.6,555.2 600.7,553.4 600.1,551.8Z M482.6,366.3 485.1,367.1 487.6,366.3 490.1,366.7 488.9,361.2 487.6,355.7 488.9,352.6 491.4,347.9 494.5,342.8 499.6,340.2 504.0,338.5 500.8,337.4 493.3,341.8 488.2,346.9 485.7,354.8 483.8,361.2Z M590.3,343.9 590.9,347.9 595.3,349.3 599.1,347.9 600.3,344.9 596.6,341.8Z M602.2,345.4 604.8,348.8 607.3,347.4 605.4,344.9Z M594.0,353.0 595.9,355.7 598.5,355.7 597.2,353.0Z M642.5,363.2 644.4,363.2 644.4,365.6 642.9,365.6Z M538.6,325.3 543.7,331.6 550.0,328.5 543.7,318.4Z M614.8,503.0 617.3,504.1 619.9,505.6 621.1,506.9 619.9,506.6 616.7,504.8Z M627.5,513.3 628.4,514.1 629.1,515.4 628.3,514.6Z M624.3,520.1 626.2,521.3 628.1,523.0 627.0,522.9 624.9,521.3Z M641.0,516.5 642.7,516.7 642.4,517.5 641.0,517.4Z M458.4,447.1 459.3,446.6 461.2,446.2 460.4,447.1 459.3,447.7Z M447.3,446.3 449.2,446.5 450.8,446.8 449.2,447.1 447.4,446.8Z M433.3,442.4 434.7,442.1 437.3,442.1 436.7,444.0 436.6,444.4 434.7,443.7 433.4,443.0Z M428.0,437.7 429.3,437.1 430.0,438.3 429.8,440.4 429.0,440.8 428.3,440.4Z M428.5,435.1 429.5,434.1 429.7,435.8 429.3,436.8 428.7,436.1Z M431.6,409.6 433.4,408.4 433.6,410.2 432.6,410.9Z M440.6,405.7 441.6,404.3 441.4,405.9Z M484.8,478.2 486.3,478.2 485.7,478.6Z M260.6,424.3 262.8,424.5 263.4,426.4 263.7,425.1 262.8,423.2 297.8,423.2 298.5,423.8 302.4,424.9 304.8,425.1 306.6,424.7 310.8,427.1 311.8,427.9 312.4,429.2 313.8,430.1 314.3,433.1 313.9,434.1 313.0,435.5 313.3,436.0 315.3,435.5 318.2,434.4 317.9,433.4 318.6,433.1 321.0,433.1 321.6,432.0 322.9,430.9 323.6,430.6 327.6,430.6 328.5,429.9 329.2,428.4 329.5,427.5 330.5,426.1 331.7,426.3 332.3,426.8 332.3,429.3 332.8,430.1 333.3,430.9 331.4,431.8 329.5,432.7 328.6,434.1 328.5,435.0 329.5,436.1 329.2,436.5 327.8,436.6 325.9,437.1 324.6,437.8 324.5,438.3 324.4,439.6 323.4,440.9 323.1,441.7 322.1,443.7 321.6,441.6 321.3,443.5 322.0,444.1 322.3,446.2 321.3,447.5 319.6,448.8 317.9,449.8 315.8,451.6 315.2,453.5 315.3,454.8 316.3,456.9 316.9,459.1 316.6,461.1 315.5,461.5 314.7,460.1 313.5,457.9 313.5,456.1 312.3,454.7 311.5,454.6 310.3,455.0 308.7,454.0 306.9,454.1 305.1,454.3 305.3,455.9 303.7,455.7 302.1,455.1 299.5,455.0 298.3,455.6 296.3,456.9 295.1,458.3 295.3,460.3 294.9,460.4 292.9,459.7 292.4,458.1 291.4,457.0 290.0,454.8 288.6,454.8 287.8,456.0 286.1,455.1 285.6,453.7 283.6,451.9 281.4,451.9 281.4,452.7 277.8,452.7 273.1,450.9 270.2,450.9 269.9,450.1 268.6,448.9 268.4,448.6 265.9,447.9 265.7,446.8 264.2,444.6 263.4,443.0 262.8,441.9 261.8,439.6 261.1,438.5 261.4,436.1 260.9,434.4 261.5,430.9 261.5,428.2Z M240.1,370.4 236.9,368.6 230.6,367.5 225.6,365.6 221.8,364.8 220.4,364.4 218.7,365.6 216.2,366.7 213.8,367.8 212.4,369.3 210.5,371.8 208.4,372.9 207.6,375.0 210.5,377.0 212.9,379.6 213.9,381.5 211.6,380.6 208.5,381.5 206.0,383.7 209.4,387.0 212.4,387.0 214.9,386.7 215.2,388.7 213.5,389.8 210.1,391.5 208.5,394.8 209.9,397.9 213.0,399.2 213.6,401.1 213.4,402.6 218.1,401.6 219.9,402.4 219.3,403.3 218.7,405.0 217.7,407.3 219.3,407.3 220.6,406.4 223.5,403.3 224.6,401.1 226.2,397.9 227.5,396.1 228.8,396.6 226.9,399.2 226.5,401.1 228.8,400.4 231.3,399.2 232.5,396.6 233.8,397.4 235.7,399.2 239.5,399.2 240.1,398.4Z M240.1,370.4 242.6,370.8 245.8,372.9 247.7,371.1 250.2,370.8 252.7,369.0 254.6,369.0 256.5,367.1 259.6,371.1 260.9,369.0 262.8,370.8 265.3,369.7 270.3,372.6 272.8,376.3 277.9,376.7 280.4,379.3 281.7,376.0 284.2,373.3 289.9,377.0 293.6,376.7 294.9,374.3 296.8,375.3 298.7,375.0 300.6,371.5 302.1,370.1 304.3,370.4 306.9,370.8 307.7,375.0 308.9,379.3 307.5,381.8 304.6,384.3 302.4,387.0 299.9,389.5 300.6,392.6 299.3,396.6 298.4,399.2 298.7,402.1 300.8,405.9 301.2,406.4 305.6,406.9 307.5,408.7 310.6,410.2 314.2,410.5 314.2,415.2 315.0,416.8 316.3,418.7 317.6,418.3 318.4,416.6 318.2,413.1 317.6,411.6 320.1,409.8 321.1,406.4 318.8,402.4 320.1,399.2 319.5,393.1 324.5,393.1 327.0,395.3 329.5,396.6 330.2,401.6 332.0,403.3 334.6,402.1 335.8,398.4 339.0,404.0 340.2,407.5 342.1,410.9 345.3,412.0 347.2,415.6 347.5,417.3 344.0,418.7 342.1,420.7 337.1,420.7 333.9,420.9 332.7,422.4 330.2,424.7 328.3,427.1 331.4,424.2 335.8,422.8 336.7,423.6 335.2,425.1 333.6,425.3 332.3,426.8 331.7,426.3 330.5,426.1 329.5,427.5 329.2,428.4 328.5,429.9 327.6,430.6 323.6,430.6 322.9,430.9 321.6,432.0 321.0,433.1 318.6,433.1 317.9,433.4 318.2,434.4 315.3,435.5 313.3,436.0 313.0,435.5 313.9,434.1 314.3,433.1 313.8,430.1 312.4,429.2 311.8,427.9 310.8,427.1 306.6,424.7 304.8,425.1 302.4,424.9 298.5,423.8 297.8,423.2 262.8,423.2 262.5,422.6 260.9,421.3 257.7,419.3 256.7,417.3 255.8,415.2 254.0,412.4 254.0,410.9 254.0,408.7 251.4,406.4 249.5,402.9 247.0,399.7 244.5,401.6 242.6,398.4 240.1,398.4Z"/>
<path fill="#fff" stroke="#dcdcdc" stroke-width="0.9" stroke-linejoin="round" d="M454.2,437.1 457.4,437.1 459.9,435.8 461.8,435.8 463.7,437.0 466.2,437.5 468.1,437.5 470.0,436.5 470.0,435.0 468.1,433.4 466.8,432.4 464.9,431.1 464.1,429.9 465.3,427.7 465.8,426.8 464.3,427.0 462.0,428.2 461.8,429.5 463.7,430.1 462.4,430.6 460.5,431.7 459.8,431.3 458.6,429.9 460.0,428.6 458.0,428.4 456.7,427.7 455.5,429.2 455.1,430.2 453.9,432.4 453.7,433.4 452.8,433.7 452.6,435.0 453.2,436.5Z M477.5,429.5 479.4,427.9 481.9,427.1 484.5,427.3 484.7,430.1 482.3,430.6 481.9,431.5 481.1,431.8 482.3,433.7 484.1,435.0 483.8,436.6 485.1,437.8 484.5,440.0 485.6,440.9 485.5,443.5 483.2,444.3 481.3,443.5 479.4,443.0 479.3,441.7 479.8,440.3 480.1,438.6 479.4,437.0 478.9,436.1 477.5,434.1 476.5,431.5Z"/>
<path fill="none" stroke="#dcdcdc" stroke-width="0.8" stroke-linejoin="round" d="M327.9,479.2 326.4,480.9 326.6,483.5 327.0,485.4 329.5,485.4 332.7,486.4 332.9,489.8 333.3,492.7 M342.1,483.5 340.5,486.6 341.2,487.6 M345.7,486.6 344.6,489.2 346.5,491.8 M349.7,487.0 349.1,491.3 M318.4,492.4 320.1,493.6 322.9,494.3 325.1,496.5 328.9,497.4 329.5,499.6 M316.6,498.5 316.9,499.9 318.2,500.5 319.1,498.6 321.3,497.4 322.6,496.1 323.0,494.3 M330.0,508.1 331.2,510.2 330.8,512.7 330.2,514.0 330.8,515.3 330.2,516.6 329.2,517.8 M330.2,516.6 331.4,519.3 331.8,521.9 333.3,523.7 331.5,526.0 331.4,529.5 329.5,533.8 329.5,538.3 328.9,542.9 328.0,547.6 327.3,552.6 327.6,557.8 326.4,563.3 M333.3,523.7 334.6,522.3 336.5,523.0 338.8,522.9 339.4,520.6 343.4,519.0 344.6,520.2 M338.8,522.9 340.9,525.1 345.1,527.3 343.9,529.8 347.2,530.0 348.9,527.6 M345.1,534.1 344.4,537.5 344.1,539.8 M301.6,475.7 301.6,474.8 302.2,473.8 303.8,473.6 303.1,472.2 303.1,471.4 305.3,471.4 305.3,473.8 305.7,473.9 M305.3,471.4 306.5,470.5 M306.6,474.2 305.3,475.9 304.2,476.8 M305.2,475.9 306.2,476.4 307.1,477.2 M307.7,477.7 309.4,476.5 310.6,475.5 312.9,475.1 M309.8,480.1 312.3,480.4 M313.3,484.1 313.7,482.2 M327.3,468.9 327.4,471.1 M414.9,446.9 415.6,450.1 416.2,451.3 413.2,453.1 410.8,454.8 406.7,456.4 406.7,458.4 411.7,461.7 419.2,467.0 421.7,469.1 423.0,469.7 M406.7,457.9 401.1,457.9 M406.7,460.3 402.6,460.3 402.6,463.9 401.3,464.4 401.3,466.7 396.3,466.7 M411.7,461.7 409.6,461.8 410.6,473.1 411.0,474.4 405.7,474.4 403.2,474.3 402.3,475.3 400.7,473.5 399.4,473.0 396.9,473.8 M402.3,475.3 403.3,478.5 400.4,478.2 398.8,478.1 396.7,478.5 M396.5,476.9 400.1,476.8 400.1,477.4 396.5,477.6 M398.8,480.3 400.4,479.4 400.4,478.2 M403.3,478.5 406.4,478.5 407.6,481.3 410.8,481.0 411.2,479.2 412.7,477.3 415.2,475.7 418.0,475.2 M400.9,482.8 403.8,481.5 404.7,483.5 406.4,485.0 407.2,484.6 408.3,488.7 M404.7,483.5 403.2,485.5 M407.2,484.6 407.6,481.3 M410.8,481.0 414.2,481.9 414.3,484.2 413.8,487.8 M414.2,481.9 414.2,480.3 417.7,480.1 418.8,480.3 420.7,478.7 M417.7,480.1 418.3,483.5 419.2,486.5 M418.8,480.3 419.7,482.8 419.7,486.4 M422.2,479.4 421.1,483.5 421.1,486.1 M435.5,477.7 434.7,480.9 432.8,483.5 431.6,485.7 429.7,486.1 428.5,488.1 M435.5,477.7 436.6,479.0 436.7,481.5 435.3,481.7 437.2,484.7 439.1,484.6 441.6,482.8 444.2,481.9 446.5,480.3 M436.6,464.4 447.9,469.1 M432.8,463.7 430.3,462.4 429.7,459.8 430.2,457.4 429.7,454.3 430.5,452.4 432.2,450.9 432.3,449.8 M429.7,454.3 428.2,450.9 427.1,448.9 428.0,447.1 428.5,444.1 M437.2,484.7 436.0,486.6 436.0,488.4 438.1,491.4 441.1,489.8 M447.6,482.8 448.6,483.7 449.4,484.7 451.1,486.4 452.2,487.6 M456.5,489.8 458.0,489.7 459.9,489.4 460.5,488.9 462.9,488.4 462.2,487.4 460.5,485.4 459.3,484.3 460.3,483.6 460.7,482.2 M430.0,491.3 431.9,491.4 434.5,491.4 438.1,491.4 M430.0,492.9 431.9,492.9 431.9,491.4 M434.5,491.4 436.0,492.9 435.2,494.2 436.0,496.1 433.8,496.7 432.7,498.6 431.7,499.1 M432.6,516.3 435.3,516.5 441.0,516.5 444.2,517.3 448.6,516.6 449.6,517.0 M447.9,508.0 447.9,510.7 445.4,510.7 445.4,514.9 447.2,516.7 M442.9,526.5 442.9,531.5 439.1,531.7 438.5,531.8 M449.6,517.0 451.7,517.1 454.0,515.3 456.0,514.1 455.7,513.1 459.5,512.0 459.1,508.8 459.6,506.2 456.5,504.6 M456.0,514.1 459.1,515.5 459.0,519.3 458.6,521.7 457.1,523.2 454.7,522.9 M457.1,523.2 458.0,526.0 458.0,529.3 459.1,529.4 M451.7,533.3 453.0,532.0 454.6,532.8 454.2,534.3 452.3,534.7 451.7,533.3 M456.7,528.1 458.0,528.1 458.0,529.8 456.7,529.8 456.7,528.1 M467.1,500.1 465.2,498.6 460.5,495.5 460.5,492.9 461.8,491.9 460.5,488.9 M460.5,495.5 456.1,495.5 456.5,497.2 456.1,498.5 454.7,499.9 M454.2,497.6 456.5,497.2 M468.6,507.5 465.6,508.5 461.7,508.9 462.8,512.7 462.2,515.9 460.9,514.0 459.5,512.0 M459.6,506.2 461.7,508.9 M470.1,496.3 469.3,494.2 469.3,490.7 470.5,489.3 467.5,489.8 465.6,489.7 463.0,488.7 462.9,488.4 M470.5,489.3 474.4,487.9 478.2,484.1 473.1,482.8 471.9,480.3 471.2,479.6 470.4,480.3 471.1,478.3 472.0,478.1 M463.7,476.0 465.4,475.2 468.1,475.7 471.1,478.3 M406.6,436.0 407.4,435.8 409.5,436.1 408.9,439.1 408.5,441.6 408.4,443.7 M422.0,418.5 424.0,418.5 425.3,418.9 M423.7,421.3 425.0,420.9 425.4,421.1 M426.5,429.0 428.4,428.4 429.4,427.9 430.8,427.7 430.8,427.0 429.8,426.0 M430.8,427.3 433.3,427.5 435.0,427.9 435.0,429.3 M435.0,427.9 438.0,427.1 M435.1,423.6 436.6,423.2 439.0,424.0 439.2,425.1 438.5,427.0 438.0,427.1 M436.6,419.3 438.5,420.7 441.4,422.2 439.1,424.0 M441.4,422.2 446.0,423.0 447.9,420.3 447.4,418.3 447.3,416.2 447.8,413.3 446.4,412.2 442.6,412.2 M446.4,412.2 446.2,410.7 444.4,410.2 M444.2,408.4 449.1,407.8 451.2,409.3 453.2,408.4 M447.8,413.3 450.2,412.4 451.2,409.3 M448.4,404.3 450.4,404.5 452.2,405.0 M447.4,418.3 451.7,417.9 456.1,418.7 457.8,417.1 M446.0,423.0 445.5,424.3 446.5,425.1 449.1,425.7 451.2,424.5 453.2,429.7 455.1,430.2 M451.2,424.5 454.2,425.1 455.5,427.9 453.2,429.7 M439.2,425.1 441.4,425.5 443.5,424.2 445.5,424.3 M446.5,425.1 444.4,428.2 443.3,428.6 441.4,429.0 439.1,428.8 438.0,427.1 M443.3,428.6 444.7,430.9 446.3,432.0 447.9,432.9 451.7,432.2 453.7,432.9 M446.3,432.0 445.9,435.3 446.5,437.0 448.6,436.6 450.8,436.3 453.0,435.8 M450.8,436.3 450.4,438.0 M443.1,439.8 444.2,437.8 446.5,437.0 M442.1,436.0 443.6,436.0 444.2,437.8 M443.6,436.0 445.9,435.3 M435.0,429.7 437.2,429.2 438.5,428.1 M437.6,430.2 441.6,430.6 442.1,433.2 441.0,435.0 M437.6,430.2 437.9,432.4 439.9,434.1 M441.6,430.6 442.1,436.0 M443.6,372.3 449.2,373.9 450.4,369.3 453.0,369.0 454.2,372.2 M463.3,445.5 463.9,444.3 465.6,444.3 471.1,443.8 474.1,443.7 473.1,440.1 472.7,439.0 472.5,437.3 470.0,436.6 M472.5,437.3 474.4,437.0 476.1,436.0 M474.4,437.0 476.3,440.0 476.3,440.9 M474.1,439.6 476.3,440.9 478.2,439.6 479.3,441.7 M471.1,443.8 469.6,447.4 466.6,449.5 464.1,451.2 462.7,450.6 M461.9,450.0 462.9,449.5 463.8,448.3 463.0,447.7 M462.5,450.6 462.4,452.4 461.8,455.3 M461.8,455.4 463.2,455.7 464.9,454.6 465.6,453.8 464.3,452.4 467.1,451.3 466.6,449.5 M467.1,451.3 470.6,452.8 474.0,455.7 476.3,455.9 477.8,456.7 M476.3,455.9 477.4,454.4 478.2,454.6 M474.1,443.7 475.6,445.8 475.0,448.6 477.8,453.1 478.8,454.6 M471.6,473.3 473.1,471.9 476.9,472.5 483.2,469.8 487.0,468.5 487.9,465.8 487.2,464.8 484.0,464.6 482.7,462.8 M487.2,464.8 488.2,463.0 488.6,461.8 M483.2,469.8 484.6,473.0 M485.6,443.5 488.2,442.2 490.8,442.9 493.3,444.6 494.8,444.6 494.8,446.2 494.0,450.1 494.3,452.4 495.4,452.5 494.4,454.7 497.1,458.6 496.7,459.6 495.3,461.4 M494.4,454.7 501.2,454.7 501.7,452.8 505.0,451.8 505.9,449.7 507.1,448.6 507.8,445.5 507.8,444.8 512.0,443.7 M494.8,446.2 497.1,445.8 498.9,445.1 501.5,443.3 503.4,444.0 505.2,443.2 506.5,441.7 507.8,442.5 507.9,444.4 510.3,443.3 512.0,443.7 M501.5,443.3 498.9,440.8 495.8,438.3 493.3,436.1 491.4,434.6 488.2,437.0 488.2,430.6 491.5,429.7 494.5,431.8 498.3,433.1 500.8,434.3 503.4,437.5 506.5,435.5 507.1,434.8 510.3,434.1 512.2,434.4 517.2,434.4 518.7,435.5 M488.2,437.0 485.7,435.3 483.8,436.3 M507.1,434.8 506.5,436.8 509.7,437.8 507.8,438.8 506.5,439.1 505.2,439.8 510.4,440.0 M505.2,439.8 503.4,440.0 502.7,442.4 503.4,444.0 M576.5,442.9 579.4,441.4 M543.8,466.5 543.8,468.1 542.4,468.9 540.9,470.5 541.9,473.5 541.4,475.1 542.7,478.3 543.0,480.3 542.0,481.3 M543.8,468.1 544.3,469.1 545.2,471.8 546.3,470.9 548.7,470.7 549.7,473.1 550.7,475.7 553.2,475.5 M546.4,465.2 547.4,467.4 549.3,468.1 548.7,469.3 550.2,470.5 553.2,475.5 553.2,478.6 551.1,479.4 551.2,480.4 549.3,481.0 M547.3,479.4 546.7,476.9 547.4,476.0 550.7,475.7 M543.8,486.0 544.9,486.9 546.3,486.4 M555.8,491.7 556.9,493.1 558.8,492.4 561.9,492.3 563.6,488.8 565.8,488.9 M595.3,497.5 595.3,505.7 M534.0,467.4 534.3,466.5 534.0,464.4 M495.3,461.4 495.5,460.3"/>
<path fill="#a5d9fd" stroke="#a5d9fd" stroke-width="0.5" stroke-linejoin="round" d="M456.5,369.7 459.3,371.1 463.0,371.8 468.1,376.7 469.6,379.9 468.1,381.8 465.6,382.1 461.8,380.9 459.0,379.3 461.2,384.0 461.7,387.2 463.7,388.7 465.6,387.5 464.9,385.5 468.1,386.7 468.1,384.0 470.6,381.2 473.1,381.8 473.1,377.7 472.9,374.3 475.6,375.0 476.3,379.3 477.9,379.6 480.7,376.0 485.1,375.0 489.5,373.9 493.3,373.3 493.9,369.7 498.3,371.5 500.8,372.6 502.1,374.3 504.0,375.0 502.1,370.8 501.7,365.2 504.0,359.1 505.2,357.0 508.4,357.9 509.4,363.2 509.0,370.8 509.0,376.0 510.3,379.9 511.5,376.0 510.9,370.8 510.3,363.2 512.2,359.1 515.3,361.2 516.6,363.2 519.1,359.1 519.5,354.8 526.7,352.6 527.3,347.9 537.4,342.8 543.7,340.2 549.1,333.4 552.5,337.4 558.8,340.2 560.7,345.4 556.3,352.6 560.0,353.5 567.6,357.0 573.3,355.7 577.7,355.7 580.2,361.2 579.6,364.0 582.7,366.0 585.2,363.2 590.3,363.2 592.8,358.3 596.6,358.3 602.9,360.0 606.6,363.2 609.8,365.6 615.5,365.2 617.1,367.1 617.7,370.1 623.0,370.1 628.1,370.4 629.3,370.8 631.8,368.6 635.6,369.7 639.4,370.1 644.4,372.9 644.4,385.5 643.2,387.0 641.3,386.4 640.6,388.4 643.2,392.9 638.1,394.5 634.4,396.6 632.2,399.2 628.1,398.4 624.9,399.4 622.1,397.6 623.0,395.3 619.5,394.2 616.7,395.0 614.8,396.1 612.9,400.4 610.4,401.4 606.6,400.2 602.9,400.9 597.8,400.9 594.7,404.0 590.9,407.5 588.1,411.3 590.0,411.8 590.9,413.1 592.2,413.1 594.0,414.1 595.6,414.6 595.8,416.8 594.7,419.3 594.7,422.2 592.8,426.0 590.9,428.8 588.4,432.4 585.2,434.4 582.7,435.0 582.2,435.1 582.7,434.3 583.0,430.8 585.4,430.4 587.4,424.5 584.6,425.7 582.7,425.7 582.1,423.4 578.3,421.7 576.4,415.6 573.3,414.1 570.0,414.6 568.9,416.0 569.7,417.3 567.6,421.3 566.1,422.2 564.7,421.7 561.9,420.9 558.8,422.2 554.4,422.6 552.5,420.9 546.6,420.1 546.2,418.5 542.1,417.3 541.1,420.3 540.3,421.7 537.4,421.3 533.6,419.7 530.7,421.7 528.3,422.8 525.0,422.0 522.2,419.3 518.5,419.7 515.8,414.6 514.1,412.6 510.3,413.1 507.1,412.6 507.0,410.2 503.6,410.9 499.6,412.2 494.5,413.3 494.9,416.2 493.3,419.3 495.2,418.7 495.0,419.7 492.6,420.3 491.4,419.1 487.9,420.1 483.8,418.3 481.7,417.9 479.0,420.1 478.7,421.7 476.6,424.3 477.0,425.5 478.3,425.5 479.4,427.9 477.5,429.5 476.5,431.5 477.5,434.1 478.9,436.1 477.9,437.1 476.1,436.0 475.0,435.0 473.1,434.8 471.9,433.7 468.1,433.4 466.8,432.4 464.9,431.1 464.1,429.9 465.3,427.7 465.8,426.8 467.8,425.5 468.1,422.0 465.6,421.5 463.0,420.5 462.3,419.3 460.9,418.7 460.5,416.6 459.9,416.6 457.8,417.1 457.1,415.0 458.6,414.1 456.7,412.0 456.5,409.6 453.2,408.4 452.6,405.5 452.2,405.0 453.0,400.7 454.2,399.2 455.7,399.4 453.9,397.6 452.7,397.6 454.9,395.3 457.4,391.5 455.5,388.4 455.2,384.0 455.6,382.4 454.2,379.3 455.5,377.0 453.7,372.9 454.1,372.2 456.5,369.7Z M341.2,487.6 342.4,488.5 342.1,490.8 343.4,492.6 344.6,492.3 346.5,491.8 349.1,491.3 351.1,491.4 352.6,489.2 354.7,491.9 354.7,494.2 356.6,495.1 357.5,495.0 361.6,496.7 361.9,497.4 365.4,497.9 368.6,498.6 370.7,500.1 373.2,500.8 373.9,503.2 373.6,505.6 371.1,508.1 369.2,510.7 368.6,513.3 368.3,517.0 367.7,519.5 366.9,520.3 366.1,522.6 364.8,524.0 363.3,524.0 361.4,524.4 359.4,525.4 357.4,527.0 356.6,528.1 356.5,530.4 356.0,531.8 354.7,533.8 353.2,535.6 352.1,537.1 350.4,539.3 350.3,537.5 347.7,535.2 345.1,534.1 347.4,531.2 349.9,529.7 350.1,528.3 348.9,527.6 349.3,525.5 347.9,525.2 347.7,523.4 344.8,522.8 344.6,520.2 344.8,518.6 345.3,517.5 344.1,516.3 344.3,515.0 341.9,515.0 341.5,511.8 339.6,511.0 338.3,510.2 336.6,510.1 335.3,509.0 335.4,506.6 333.8,506.7 332.0,507.8 330.0,508.1 328.8,508.1 328.8,506.2 326.8,506.9 325.5,506.1 324.5,503.5 325.7,501.8 325.9,500.8 329.5,499.6 329.7,499.5 330.3,495.6 329.5,493.6 330.7,493.4 329.8,492.1 332.2,492.1 333.3,492.7 334.2,493.3 335.2,493.2 337.1,491.8 337.8,491.4 337.1,491.0 336.8,489.0 338.6,489.5 338.7,489.2 340.9,488.5Z M561.5,522.3 560.5,525.4 560.7,528.1 561.5,530.7 562.6,533.8 563.4,536.8 562.6,540.2 564.4,541.3 566.3,541.5 568.9,539.6 573.3,539.6 576.4,537.2 580.2,536.2 583.0,536.0 584.6,536.8 586.7,537.8 588.5,541.2 589.0,540.5 591.3,537.7 590.9,539.8 590.3,541.6 591.5,540.1 592.2,541.3 591.7,542.4 593.4,542.4 593.8,544.4 594.8,546.0 597.2,546.7 598.5,547.3 600.0,546.3 601.0,546.8 602.1,547.8 603.6,546.0 606.5,545.2 606.9,542.9 607.8,540.2 608.3,539.5 609.8,536.8 610.5,533.8 611.2,531.8 610.7,529.5 610.7,526.7 608.9,525.4 607.6,524.0 606.0,522.6 605.6,521.3 604.5,519.9 602.6,518.9 601.6,516.6 601.3,515.8 600.7,513.3 599.7,512.3 598.8,512.5 598.5,510.5 597.3,507.8 596.1,510.1 596.1,513.3 595.1,516.6 593.4,516.6 591.1,514.4 588.4,513.1 589.0,510.7 590.0,509.7 587.7,509.4 585.2,508.9 584.7,508.5 582.7,509.7 581.4,511.4 580.9,513.2 579.2,513.3 578.3,512.0 576.4,512.0 575.1,513.7 574.3,515.0 573.3,516.3 571.6,515.9 571.6,517.3 570.1,519.4 567.6,519.9 564.7,520.7 562.6,521.9Z"/>
<path fill="#5db1f2" stroke="#5db1f2" stroke-width="0.5" stroke-linejoin="round" d="M240.1,370.4 242.6,370.8 245.8,372.9 247.7,371.1 250.2,370.8 252.7,369.0 254.6,369.0 256.5,367.1 259.6,371.1 260.9,369.0 262.8,370.8 265.3,369.7 270.3,372.6 272.8,376.3 277.9,376.7 280.4,379.3 281.7,376.0 284.2,373.3 289.9,377.0 293.6,376.7 294.9,374.3 296.8,375.3 298.7,375.0 300.6,371.5 302.1,370.1 304.3,370.4 306.9,370.8 307.7,375.0 308.9,379.3 307.5,381.8 304.6,384.3 302.4,387.0 299.9,389.5 300.6,392.6 299.3,396.6 298.4,399.2 298.7,402.1 300.8,405.9 301.2,406.4 305.6,406.9 307.5,408.7 310.6,410.2 314.2,410.5 314.2,415.2 315.0,416.8 316.3,418.7 317.6,418.3 318.4,416.6 318.2,413.1 317.6,411.6 320.1,409.8 321.1,406.4 318.8,402.4 320.1,399.2 319.5,393.1 324.5,393.1 327.0,395.3 329.5,396.6 330.2,401.6 332.0,403.3 334.6,402.1 335.8,398.4 339.0,404.0 340.2,407.5 342.1,410.9 345.3,412.0 347.2,415.6 347.5,417.3 344.0,418.7 342.1,420.7 337.1,420.7 333.9,420.9 332.7,422.4 330.2,424.7 328.3,427.1 331.4,424.2 335.8,422.8 336.7,423.6 335.2,425.1 333.6,425.3 332.3,426.8 331.7,426.3 330.5,426.1 329.5,427.5 329.2,428.4 328.5,429.9 327.6,430.6 323.6,430.6 322.9,430.9 321.6,432.0 321.0,433.1 318.6,433.1 317.9,433.4 318.2,434.4 315.3,435.5 313.3,436.0 313.0,435.5 313.9,434.1 314.3,433.1 313.8,430.1 312.4,429.2 311.8,427.9 310.8,427.1 306.6,424.7 304.8,425.1 302.4,424.9 298.5,423.8 297.8,423.2 262.8,423.2 262.5,422.6 260.9,421.3 257.7,419.3 256.7,417.3 255.8,415.2 254.0,412.4 254.0,410.9 254.0,408.7 251.4,406.4 249.5,402.9 247.0,399.7 244.5,401.6 242.6,398.4 240.1,398.4Z M510.9,447.5 512.8,446.3 515.7,446.3 517.1,448.2 517.6,450.6 516.5,450.9 516.8,452.4 519.7,454.3 518.6,456.3 522.6,458.3 525.8,459.4 528.5,459.7 528.7,457.6 529.7,458.4 530.8,459.3 533.6,459.1 533.6,457.7 536.1,456.0 538.9,455.6 540.4,457.0 538.9,458.4 537.6,459.3 536.9,461.4 535.2,463.0 534.8,465.8 534.0,464.4 532.7,462.9 534.1,461.5 530.8,461.2 530.8,460.3 529.0,459.6 529.6,461.0 528.5,462.1 529.4,462.6 529.6,464.4 529.8,466.3 528.5,466.3 527.3,466.5 527.2,467.5 526.5,468.6 525.0,469.1 523.5,470.7 521.4,472.5 520.0,473.4 518.8,474.2 518.6,477.0 518.3,479.0 518.2,481.2 517.2,482.4 516.2,482.9 515.3,484.0 514.1,482.8 513.7,481.5 512.4,479.0 511.9,477.7 511.0,475.3 510.3,473.8 509.7,471.1 509.4,469.8 509.3,467.1 509.0,465.5 508.5,466.9 507.1,467.5 505.9,467.1 504.6,465.4 505.9,465.0 506.2,464.4 504.4,464.1 503.6,463.5 504.4,462.6 505.9,462.8 507.1,462.5 506.9,460.7 506.0,460.3 505.2,459.1 506.2,457.4 508.3,457.6 509.5,456.0 510.2,454.6 511.7,453.1 511.5,451.6 512.5,451.2 511.7,450.1 510.7,448.2Z"/>
<path fill="#1975b5" stroke="#1975b5" stroke-width="0.5" stroke-linejoin="round" d="M260.6,424.3 262.8,424.5 263.4,426.4 263.7,425.1 262.8,423.2 297.8,423.2 298.5,423.8 302.4,424.9 304.8,425.1 306.6,424.7 310.8,427.1 311.8,427.9 312.4,429.2 313.8,430.1 314.3,433.1 313.9,434.1 313.0,435.5 313.3,436.0 315.3,435.5 318.2,434.4 317.9,433.4 318.6,433.1 321.0,433.1 321.6,432.0 322.9,430.9 323.6,430.6 327.6,430.6 328.5,429.9 329.2,428.4 329.5,427.5 330.5,426.1 331.7,426.3 332.3,426.8 332.3,429.3 332.8,430.1 333.3,430.9 331.4,431.8 329.5,432.7 328.6,434.1 328.5,435.0 329.5,436.1 329.2,436.5 327.8,436.6 325.9,437.1 324.6,437.8 324.5,438.3 324.4,439.6 323.4,440.9 323.1,441.7 322.1,443.7 321.6,441.6 321.3,443.5 322.0,444.1 322.3,446.2 321.3,447.5 319.6,448.8 317.9,449.8 315.8,451.6 315.2,453.5 315.3,454.8 316.3,456.9 316.9,459.1 316.6,461.1 315.5,461.5 314.7,460.1 313.5,457.9 313.5,456.1 312.3,454.7 311.5,454.6 310.3,455.0 308.7,454.0 306.9,454.1 305.1,454.3 305.3,455.9 303.7,455.7 302.1,455.1 299.5,455.0 298.3,455.6 296.3,456.9 295.1,458.3 295.3,460.3 294.9,460.4 292.9,459.7 292.4,458.1 291.4,457.0 290.0,454.8 288.6,454.8 287.8,456.0 286.1,455.1 285.6,453.7 283.6,451.9 281.4,451.9 281.4,452.7 277.8,452.7 273.1,450.9 270.2,450.9 269.9,450.1 268.6,448.9 268.4,448.6 265.9,447.9 265.7,446.8 264.2,444.6 263.4,443.0 262.8,441.9 261.8,439.6 261.1,438.5 261.4,436.1 260.9,434.4 261.5,430.9 261.5,428.2Z M240.1,370.4 236.9,368.6 230.6,367.5 225.6,365.6 221.8,364.8 220.4,364.4 218.7,365.6 216.2,366.7 213.8,367.8 212.4,369.3 210.5,371.8 208.4,372.9 207.6,375.0 210.5,377.0 212.9,379.6 213.9,381.5 211.6,380.6 208.5,381.5 206.0,383.7 209.4,387.0 212.4,387.0 214.9,386.7 215.2,388.7 213.5,389.8 210.1,391.5 208.5,394.8 209.9,397.9 213.0,399.2 213.6,401.1 213.4,402.6 218.1,401.6 219.9,402.4 219.3,403.3 218.7,405.0 217.7,407.3 219.3,407.3 220.6,406.4 223.5,403.3 224.6,401.1 226.2,397.9 227.5,396.1 228.8,396.6 226.9,399.2 226.5,401.1 228.8,400.4 231.3,399.2 232.5,396.6 233.8,397.4 235.7,399.2 239.5,399.2 240.1,398.4Z"/>
<path fill="#fee3c8" stroke="#fee3c8" stroke-width="0.5" stroke-linejoin="round" d="M587.4,424.5 585.4,430.4 583.0,430.8 582.7,434.3 582.2,435.1 580.2,435.8 578.9,436.6 577.5,436.1 574.4,439.1 570.9,440.9 571.6,438.3 570.1,437.8 567.6,440.4 566.0,441.1 567.5,443.2 568.2,443.7 569.9,442.7 572.0,443.3 570.1,444.8 568.0,447.1 569.2,449.4 571.1,452.1 570.7,454.6 571.4,454.8 570.7,457.0 568.9,459.4 567.6,461.2 566.3,462.5 564.4,464.4 561.5,465.4 560.0,465.8 557.5,466.6 556.5,468.1 555.9,466.5 553.7,466.5 552.1,465.8 552.0,464.6 550.3,464.0 548.6,465.0 546.4,465.2 545.9,466.9 545.2,466.7 543.8,466.5 542.7,465.6 543.0,464.6 542.0,463.0 540.6,463.0 540.5,461.9 542.0,460.4 541.9,458.1 540.4,457.0 538.9,455.6 537.9,455.9 536.1,456.0 533.6,457.7 533.1,457.6 530.8,457.2 529.7,458.3 528.7,457.6 526.0,457.4 523.5,456.3 521.0,454.3 519.7,454.3 518.7,453.4 517.2,452.9 516.8,452.4 516.5,450.9 517.6,450.6 517.2,448.2 515.9,446.3 513.4,445.7 512.2,444.0 511.7,443.7 512.0,441.6 510.7,441.4 510.4,440.0 510.9,439.0 513.4,438.5 515.9,437.5 518.7,435.8 518.7,434.4 519.5,433.7 519.0,431.1 518.3,430.8 521.6,430.2 521.4,426.6 522.2,426.6 525.4,427.0 525.6,424.3 527.3,423.0 528.3,422.8 529.2,424.5 531.1,425.5 532.3,428.8 532.2,430.2 535.5,430.8 537.9,431.8 539.1,434.6 543.7,434.8 545.9,435.0 550.0,436.5 553.1,435.1 556.3,434.6 558.6,432.9 558.6,430.6 560.8,430.9 563.2,429.9 564.6,428.2 568.6,427.5 566.3,425.3 563.3,425.3 563.8,423.6 564.7,421.7 566.1,422.2 567.6,421.3 569.7,417.3 568.9,416.0 570.0,414.6 573.3,414.1 576.4,415.6 578.3,421.7 582.1,423.4 582.7,425.7 584.6,425.7Z"/>
<path fill="#fed39f" stroke="#fed39f" stroke-width="0.5" stroke-linejoin="round" d="M448.2,383.1 445.7,383.1 444.4,384.6 444.8,386.4 443.6,389.0 442.0,389.8 440.2,391.8 439.4,394.0 439.4,397.4 441.5,399.2 441.0,400.9 439.1,402.6 438.7,404.3 438.4,407.1 437.6,408.4 435.8,408.7 435.6,410.0 433.9,410.0 433.7,408.2 432.8,405.2 431.9,403.1 431.7,401.6 432.6,399.7 433.4,398.6 433.9,395.8 433.1,394.8 432.9,391.2 433.7,389.0 435.5,387.8 435.0,386.7 436.1,385.5 436.0,382.1 437.1,381.5 438.4,379.3 438.1,377.7 440.2,376.0 440.5,374.3 442.9,374.6 443.6,372.3 447.3,376.3 447.8,377.7 447.6,380.9Z M426.8,414.8 426.5,414.6 427.8,413.7 428.5,413.3 428.9,411.3 430.2,411.6 431.4,412.4 431.6,413.1 433.4,412.4 434.6,412.4 435.2,413.5 435.3,414.6 435.1,415.6 435.6,417.1 435.6,417.7 435.8,419.3 435.2,419.3 434.3,419.9 433.1,420.7 433.4,421.7 434.6,423.6 433.9,424.5 433.7,425.7 433.1,425.8 431.6,426.0 430.5,426.2 429.8,425.8 428.5,425.5 427.3,425.7 427.3,424.2 428.0,423.2 426.1,422.8 425.8,422.2 425.4,421.1 425.3,419.7 425.3,417.7 426.3,417.5 426.5,416.4Z M415.4,433.4 416.2,431.5 416.3,429.7 416.2,428.4 415.1,427.0 412.2,425.5 411.7,424.3 413.3,423.6 415.7,424.0 415.3,421.8 416.3,422.4 417.8,422.2 419.6,421.1 419.7,419.5 420.8,419.1 421.6,419.7 423.0,421.3 423.7,421.3 425.0,422.2 425.8,422.2 426.1,422.8 428.0,423.2 427.3,424.2 427.3,425.8 426.5,426.2 425.4,428.2 426.3,428.1 426.5,429.0 426.0,430.4 426.5,431.1 427.1,432.7 426.0,433.7 424.5,433.6 423.0,433.2 421.6,433.9 421.6,435.1 419.8,435.0 418.6,434.4 417.1,434.4Z M418.0,475.2 419.0,475.1 422.1,474.6 423.0,472.7 423.0,469.7 425.0,469.1 427.1,467.3 432.8,463.7 435.6,465.0 436.6,464.4 437.2,467.1 437.3,468.5 437.5,471.1 437.2,472.6 434.8,475.7 434.8,476.8 433.4,477.6 430.3,477.3 429.0,477.9 426.5,477.7 424.6,476.5 422.9,477.0 422.2,479.4 421.2,478.5 420.5,478.3 418.8,477.2 418.2,476.4Z M433.1,501.6 433.6,500.5 434.2,500.0 435.8,500.4 437.0,499.6 438.1,497.0 440.0,494.8 440.4,491.7 441.1,489.8 441.0,488.8 442.3,487.8 445.9,489.0 446.5,488.1 448.4,487.8 449.6,487.9 452.2,487.6 453.5,488.8 454.9,488.5 456.5,489.8 456.4,491.2 457.1,491.6 455.4,493.2 455.0,494.8 455.0,496.0 454.2,497.6 454.5,499.2 454.7,499.9 454.9,501.8 456.5,504.6 454.1,504.9 453.5,505.8 453.7,506.9 453.5,509.2 454.2,509.9 455.2,509.7 455.2,511.2 453.6,510.2 452.0,508.9 450.4,509.3 449.6,508.4 448.4,508.7 447.9,508.0 445.7,508.4 445.4,506.2 445.2,503.4 443.5,503.0 442.3,503.0 441.6,504.3 439.9,504.4 438.6,501.6 434.1,501.6Z M442.9,522.6 442.9,526.5 443.9,529.4 445.0,529.4 446.2,528.1 446.7,527.2 448.8,527.9 449.9,527.6 450.3,526.3 451.5,525.8 451.7,524.8 453.3,523.4 454.7,522.9 453.0,522.1 452.6,520.6 450.7,519.4 449.6,517.0 448.2,517.3 447.0,517.3 444.2,517.7 444.2,522.6Z"/>
<path fill="#fed39f" stroke="#f7dcc0" stroke-width="0.7" d="M449.2,452.2 449.2,465.8 464.2,465.8 462.7,463.2 461.2,460.5 460.3,458.4 458.8,454.7 460.0,457.4 460.9,457.7 461.7,455.3 460.8,452.7 458.4,452.7 456.7,452.2 454.2,453.2 451.7,452.5Z M449.2,465.8 449.2,468.5 447.9,468.5 447.9,474.2 446.5,474.3 446.0,476.4 445.4,478.1 446.5,480.3 447.6,482.8 448.9,481.8 451.1,482.2 453.0,482.4 454.2,481.9 454.9,481.4 456.7,481.8 458.5,479.4 459.5,478.7 459.3,481.3 460.7,482.2 460.9,480.8 461.8,480.0 463.2,478.1 463.7,476.0 463.5,475.0 464.3,472.3 466.3,471.1 464.8,470.1 464.6,468.5 464.4,467.1 464.2,465.8Z"/>
</svg>
<div class="panel" style="left:669px;top:335px;width:695px;height:240px"></div>
<div class="panel" style="left:186px;top:585px;width:825px;height:200px"></div>
<div class="a" style="left:785px;top:173px;width:563px;height:2px;background:#ddd"></div>
<div class="a" style="left:785px;top:202px;width:563px;height:1px;background:#e3e3e3"></div>
<div class="a" style="left:785px;top:230px;width:563px;height:1px;background:#e3e3e3"></div>
<div class="a" style="left:785px;top:258px;width:563px;height:1px;background:#e3e3e3"></div>
<div class="a" style="left:785px;top:286px;width:563px;height:1px;background:#e3e3e3"></div>
<div class="a" style="left:775px;top:147px;width:1px;height:157px;background:#ddd"></div>
<div class="a" style="left:685px;top:383px;width:205px;height:2px;background:#ddd"></div>
<div class="a" style="left:685px;top:411px;width:205px;height:1px;background:#e3e3e3"></div>
<div class="a" style="left:685px;top:439px;width:205px;height:1px;background:#e3e3e3"></div>
<div class="a" style="left:685px;top:468px;width:205px;height:1px;background:#e3e3e3"></div>
<div class="a" style="left:685px;top:496px;width:205px;height:1px;background:#e3e3e3"></div>
<div class="a" style="left:910px;top:383px;width:205px;height:2px;background:#ddd"></div>
<div class="a" style="left:910px;top:411px;width:205px;height:1px;background:#e3e3e3"></div>
<div class="a" style="left:910px;top:439px;width:205px;height:1px;background:#e3e3e3"></div>
<div class="a" style="left:910px;top:468px;width:205px;height:1px;background:#e3e3e3"></div>
<div class="a" style="left:910px;top:496px;width:205px;height:1px;background:#e3e3e3"></div>
<div class="a" style="left:1136px;top:383px;width:205px;height:2px;background:#ddd"></div>
<div class="a" style="left:1136px;top:411px;width:205px;height:1px;background:#e3e3e3"></div>
<div class="a" style="left:1136px;top:439px;width:205px;height:1px;background:#e3e3e3"></div>
<div class="a" style="left:1136px;top:468px;width:205px;height:1px;background:#e3e3e3"></div>
<div class="a" style="left:1136px;top:496px;width:205px;height:1px;background:#e3e3e3"></div>
<div class="a" style="left:192px;top:630px;width:813px;height:2px;background:#ddd"></div>
<div class="a" style="left:192px;top:659px;width:813px;height:1px;background:#e3e3e3"></div>
<div class="a" style="left:192px;top:689px;width:813px;height:1px;background:#e3e3e3"></div>
<div class="a" style="left:192px;top:719px;width:813px;height:1px;background:#e3e3e3"></div>
<div class="x d" style="left:7px;top:1px;font-size:8.5px;color:#7ac143;letter-spacing:0.54px;font-weight:bold">Manage</div>
<div class="x d" style="left:47.8px;top:1px;font-size:8.5px;color:#fff;letter-spacing:0.84px">Engine</div>
<div class="x d" style="left:228.1px;top:15px;font-size:12px;color:#fff;letter-spacing:0.03px">Analytics</div>
<div class="x d" style="left:328.5px;top:15px;font-size:12px;color:#fff;letter-spacing:0.47px">HeatMap</div>
<div class="x d" style="left:431.2px;top:15px;font-size:12px;color:#fff;letter-spacing:-0.15px">Admin</div>
<div class="x d" style="left:1244.3px;top:2px;font-size:11px;color:#838d94;letter-spacing:0.04px">Welcome User</div>
<div class="x d" style="left:1243.5px;top:19px;font-size:11px;color:#fff;letter-spacing:0.32px">admin</div>
<div class="x d" style="left:195.7px;top:50px;font-size:12px;color:#444c54;letter-spacing:0.06px">Referrer Type :</div>
<div class="x d" style="left:302px;top:50px;font-size:12px;color:#444;letter-spacing:-0.35px">All</div>
<div class="x d" style="left:472.6px;top:50px;font-size:12px;color:#444c54;letter-spacing:0.19px">Country :</div>
<div class="x d" style="left:546px;top:50px;font-size:12px;color:#444;letter-spacing:-0.35px">All</div>
<div class="x d" style="left:185.5px;top:83px;font-size:12px;color:#222;letter-spacing:0.43px;font-weight:bold">RealTime/Overview</div>
<div class="x d" style="left:185.5px;top:103px;font-size:11px;color:#8b8ba3;letter-spacing:0.21px">Up-to-the-minute real time information of you website's visitors and webpage performance.</div>
<div class="x d" style="left:48px;top:65px;font-size:13px;color:#48525a;letter-spacing:-0.12px">Dashboard</div>
<div class="x d" style="left:48px;top:127px;font-size:13px;color:#48525a;letter-spacing:-0.59px">RealTime</div>
<div class="x d" style="left:48px;top:245px;font-size:13px;color:#48525a;letter-spacing:-0.3px">Visitors</div>
<div class="x d" style="left:48px;top:391px;font-size:13px;color:#48525a;letter-spacing:-0.1px">Pages</div>
<div class="x d" style="left:48px;top:509px;font-size:13px;color:#48525a;letter-spacing:-0.42px">History</div>
<div class="x d" style="left:48px;top:627px;font-size:13px;color:#48525a;letter-spacing:-0.33px">Custom Reports</div>
<div class="x d" style="left:58.7px;top:96px;font-size:11px;color:#434b53;letter-spacing:0.1px">Overview</div>
<div class="x d" style="left:58.6px;top:158px;font-size:11px;color:#0a870a;letter-spacing:0.19px;font-weight:bold">Overview</div>
<div class="x d" style="left:58.7px;top:186px;font-size:11px;color:#434b53;letter-spacing:0.27px">Visitors</div>
<div class="x d" style="left:58.7px;top:214px;font-size:11px;color:#434b53;letter-spacing:0.24px">Speed Map</div>
<div class="x d" style="left:58.7px;top:276px;font-size:11px;color:#434b53;letter-spacing:0.1px">Overview</div>
<div class="x d" style="left:58.7px;top:304px;font-size:11px;color:#434b53;letter-spacing:0.27px">Platform</div>
<div class="x d" style="left:58.7px;top:332px;font-size:11px;color:#434b53;letter-spacing:0.8px">Geo</div>
<div class="x d" style="left:58.7px;top:360px;font-size:11px;color:#434b53;letter-spacing:0.33px">Referrer</div>
<div class="x d" style="left:58.7px;top:422px;font-size:11px;color:#434b53;letter-spacing:0.1px">Overview</div>
<div class="x d" style="left:58.7px;top:450px;font-size:11px;color:#434b53;letter-spacing:0.56px">Error Pages</div>
<div class="x d" style="left:58.7px;top:478px;font-size:11px;color:#434b53;letter-spacing:0.42px">Site Speed</div>
<div class="x d" style="left:58.7px;top:540px;font-size:11px;color:#434b53;letter-spacing:0.25px">New Visitors</div>
<div class="x d" style="left:58.7px;top:568px;font-size:11px;color:#434b53;letter-spacing:0.26px">Return Visitors</div>
<div class="x d" style="left:58.7px;top:596px;font-size:11px;color:#434b53;letter-spacing:0.22px">Converted Visitors</div>
<div class="x d" style="left:58.7px;top:658px;font-size:11px;color:#434b53;letter-spacing:0.1px">Overview</div>
<div class="x l" style="left:478.9px;top:196px;font-size:30px;color:#111;letter-spacing:-1.0px">17</div>
<div class="x d" style="left:424px;top:279px;font-size:20px;color:#333;letter-spacing:0.06px">Active Visitors</div>
<div class="x d" style="left:792.5px;top:147px;font-size:12px;color:#444;letter-spacing:0.57px">Page</div>
<div class="x d" style="left:1288.2px;top:147px;font-size:12px;color:#444;letter-spacing:0.25px">Views</div>
<div class="x l" style="left:790.3px;top:179px;font-size:13.5px;color:#111;letter-spacing:0.18px">https://www.manageengine.com/web-analytics/</div>
<div class="x l" style="left:1297.5px;top:179px;font-size:13.5px;color:#111">3</div>
<div class="x l" style="left:790.3px;top:207px;font-size:13.5px;color:#111;letter-spacing:0.23px">https://www.manageengine.com/web-analytics/features.html</div>
<div class="x l" style="left:1297.5px;top:207px;font-size:13.5px;color:#111">2</div>
<div class="x l" style="left:790.3px;top:235px;font-size:13.5px;color:#111;letter-spacing:0.24px">https://www.manageengine.com/web-analytics/demo.html</div>
<div class="x l" style="left:1297.5px;top:235px;font-size:13.5px;color:#111">3</div>
<div class="x l" style="left:790.3px;top:263px;font-size:13.5px;color:#111;letter-spacing:0.25px">https://www.manageengine.com/web-analytics/support.html</div>
<div class="x l" style="left:1297.5px;top:263px;font-size:13.5px;color:#111">1</div>
<div class="x l" style="left:790.3px;top:291px;font-size:13.5px;color:#111;letter-spacing:0.24px">https://www.manageengine.com/web-analytics/download.html</div>
<div class="x l" style="left:1297.5px;top:291px;font-size:13.5px;color:#111">4</div>
<div class="x d" style="left:692.9px;top:357px;font-size:12px;color:#444;letter-spacing:-0.12px">Device</div>
<div class="x d" style="left:835.8px;top:357px;font-size:12px;color:#444;letter-spacing:0.05px">Views</div>
<div class="x l" style="left:690.1px;top:387px;font-size:11.5px;color:#111;letter-spacing:0.73px">Personal Computer</div>
<div class="x l" style="left:848.0px;top:387px;font-size:11.5px;color:#111">9</div>
<div class="x l" style="left:690.1px;top:415px;font-size:11.5px;color:#111;letter-spacing:0.68px">Tablet</div>
<div class="x l" style="left:848.0px;top:415px;font-size:11.5px;color:#111">3</div>
<div class="x l" style="left:690.1px;top:443px;font-size:11.5px;color:#111;letter-spacing:0.93px">Smartphone</div>
<div class="x l" style="left:848.0px;top:443px;font-size:11.5px;color:#111">5</div>
<div class="x d" style="left:918.2px;top:357px;font-size:12px;color:#444;letter-spacing:-0.6px">OS</div>
<div class="x d" style="left:1006.2px;top:357px;font-size:12px;color:#444;letter-spacing:0.27px">Views</div>
<div class="x l" style="left:917.6px;top:387px;font-size:11.5px;color:#111;letter-spacing:0.98px">Linux</div>
<div class="x l" style="left:1014.1px;top:387px;font-size:11.5px;color:#111">1</div>
<div class="x l" style="left:917.6px;top:415px;font-size:11.5px;color:#111;letter-spacing:0.82px">Windows</div>
<div class="x l" style="left:1014.1px;top:415px;font-size:11.5px;color:#111;letter-spacing:-0.1px">13</div>
<div class="x l" style="left:917.6px;top:443px;font-size:11.5px;color:#111;letter-spacing:0.95px">Mac</div>
<div class="x l" style="left:1014.1px;top:443px;font-size:11.5px;color:#111">2</div>
<div class="x l" style="left:917.6px;top:471px;font-size:11.5px;color:#111;letter-spacing:-0.05px">BSD</div>
<div class="x l" style="left:1014.1px;top:471px;font-size:11.5px;color:#111">1</div>
<div class="x d" style="left:1143.7px;top:357px;font-size:12px;color:#444;letter-spacing:0.13px">Browser</div>
<div class="x d" style="left:1259.9px;top:357px;font-size:12px;color:#444">Views</div>
<div class="x l" style="left:1141.0px;top:387px;font-size:11.5px;color:#111;letter-spacing:-0.5px">FIRFOX</div>
<div class="x l" style="left:1264.6px;top:387px;font-size:11.5px;color:#111">6</div>
<div class="x l" style="left:1141.0px;top:415px;font-size:11.5px;color:#111;letter-spacing:-0.2px">CHROME</div>
<div class="x l" style="left:1264.6px;top:415px;font-size:11.5px;color:#111">7</div>
<div class="x l" style="left:1141.0px;top:443px;font-size:11.5px;color:#111;letter-spacing:-0.2px">SAFARI</div>
<div class="x l" style="left:1264.6px;top:443px;font-size:11.5px;color:#111">2</div>
<div class="x l" style="left:1141.0px;top:471px;font-size:11.5px;color:#111">IE</div>
<div class="x l" style="left:1264.6px;top:471px;font-size:11.5px;color:#111">2</div>
<div class="x d" style="left:199.5px;top:604px;font-size:12px;color:#444;letter-spacing:0.32px">Referrer Page</div>
<div class="x d" style="left:912.4px;top:604px;font-size:12px;color:#444;letter-spacing:0.3px">Views</div>
<div class="x l" style="left:197.5px;top:636px;font-size:13.5px;color:#111;letter-spacing:1.14px">http://www.google.com</div>
<div class="x l" style="left:910.5px;top:636px;font-size:13.5px;color:#111;letter-spacing:1.5px">10</div>
<div class="x l" style="left:197.5px;top:664px;font-size:13.5px;color:#111;letter-spacing:1.21px">http://www.yahoo.com</div>
<div class="x l" style="left:910.5px;top:664px;font-size:13.5px;color:#111">2</div>
<div class="x l" style="left:197.5px;top:692px;font-size:13.5px;color:#111;letter-spacing:1.11px">http://www.duckduckgo.com</div>
<div class="x l" style="left:910.5px;top:692px;font-size:13.5px;color:#111">1</div>
<div class="a" style="left:0;top:759px;width:1384px;height:1px;background:#fff"></div>
</div>
</body>
</html>
